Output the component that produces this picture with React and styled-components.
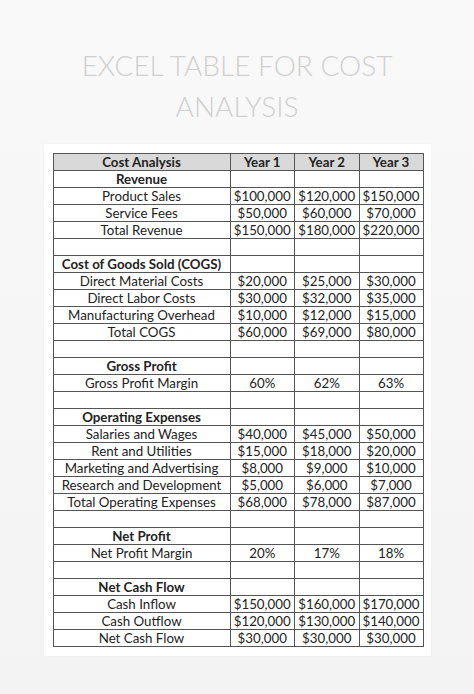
import React from "react";
import styled, { createGlobalStyle } from "styled-components";

const GlobalStyle = createGlobalStyle`
  html, body {
    margin: 0;
    padding: 0;
  }
  body {
    background: linear-gradient(#f9f9f9, #f3f3f3);
    font-family: "Lato", "Open Sans", sans-serif;
    min-height: 694px;
  }
`;

const Page = styled.div`
  width: 474px;
  min-height: 694px;
  display: flex;
  flex-direction: column;
  align-items: center;
  padding-top: 45px;
  box-sizing: border-box;
`;

const Title = styled.h1`
  margin: 0;
  width: 340px;
  font-family: "Lato", sans-serif;
  font-weight: 300;
  font-size: 28px;
  line-height: 41px;
  color: #cfcfcf;
  text-align: center;
`;

const Card = styled.div`
  margin-top: 17px;
  width: 387px;
  background: #ffffff;
  padding: 9px 8px 9px 9px;
  box-sizing: border-box;
  box-shadow: 0 0 2px rgba(0, 0, 0, 0.04);
`;

const Table = styled.table`
  width: 370px;
  border-collapse: collapse;
  table-layout: fixed;
  border: 1.5px solid #4a4a4a;
  font-family: "Lato", "Open Sans", sans-serif;
  font-size: 13.3px;
  color: #222222;
`;

const Cell = styled.td`
  height: 16px;
  padding: 0;
  border: 1px solid #555555;
  text-align: center;
  line-height: 16px;
  white-space: nowrap;
  font-weight: ${({ $bold }) => ($bold ? 700 : 400)};
`;

const HeadCell = styled.th`
  height: 16px;
  padding: 0;
  border: 1px solid #555555;
  background: #d9d9d9;
  text-align: center;
  line-height: 16px;
  font-weight: 700;
`;

const rows = [
  ["Revenue", null, null, null, true],
  ["Product Sales", "$100,000", "$120,000", "$150,000"],
  ["Service Fees", "$50,000", "$60,000", "$70,000"],
  ["Total Revenue", "$150,000", "$180,000", "$220,000"],
  ["", "", "", ""],
  ["Cost of Goods Sold (COGS)", null, null, null, true],
  ["Direct Material Costs", "$20,000", "$25,000", "$30,000"],
  ["Direct Labor Costs", "$30,000", "$32,000", "$35,000"],
  ["Manufacturing Overhead", "$10,000", "$12,000", "$15,000"],
  ["Total COGS", "$60,000", "$69,000", "$80,000"],
  ["", "", "", ""],
  ["Gross Profit", null, null, null, true],
  ["Gross Profit Margin", "60%", "62%", "63%"],
  ["", "", "", ""],
  ["Operating Expenses", null, null, null, true],
  ["Salaries and Wages", "$40,000", "$45,000", "$50,000"],
  ["Rent and Utilities", "$15,000", "$18,000", "$20,000"],
  ["Marketing and Advertising", "$8,000", "$9,000", "$10,000"],
  ["Research and Development", "$5,000", "$6,000", "$7,000"],
  ["Total Operating Expenses", "$68,000", "$78,000", "$87,000"],
  ["", "", "", ""],
  ["Net Profit", null, null, null, true],
  ["Net Profit Margin", "20%", "17%", "18%"],
  ["", "", "", ""],
  ["Net Cash Flow", null, null, null, true],
  ["Cash Inflow", "$150,000", "$160,000", "$170,000"],
  ["Cash Outflow", "$120,000", "$130,000", "$140,000"],
  ["Net Cash Flow", "$30,000", "$30,000", "$30,000"],
];

const App = () => {
  return (
    <>
      <GlobalStyle />
      <Page>
        <Title>EXCEL TABLE FOR COST ANALYSIS</Title>
        <Card>
          <Table>
            <colgroup>
              <col style={{ width: "177px" }} />
              <col style={{ width: "64.5px" }} />
              <col style={{ width: "64.5px" }} />
              <col style={{ width: "64px" }} />
            </colgroup>
            <thead>
              <tr>
                <HeadCell>Cost Analysis</HeadCell>
                <HeadCell>Year 1</HeadCell>
                <HeadCell>Year 2</HeadCell>
                <HeadCell>Year 3</HeadCell>
              </tr>
            </thead>
            <tbody>
              {rows.map((r, i) => (
                <tr key={i}>
                  <Cell $bold={r[4]}>{r[0]}</Cell>
                  <Cell>{r[1]}</Cell>
                  <Cell>{r[2]}</Cell>
                  <Cell>{r[3]}</Cell>
                </tr>
              ))}
            </tbody>
          </Table>
        </Card>
      </Page>
    </>
  );
};

export default App;
